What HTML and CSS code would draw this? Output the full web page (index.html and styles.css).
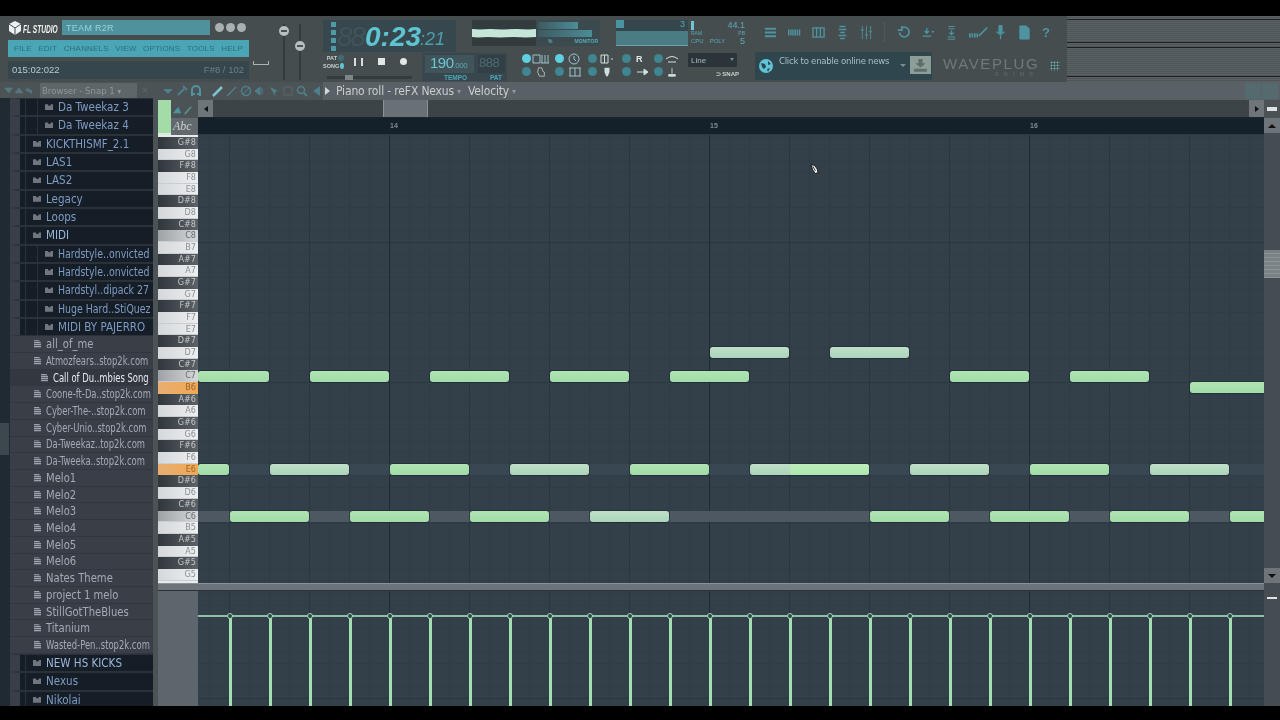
FILE: index.html
```html
<!DOCTYPE html>
<html lang="en">
<head>
  <meta charset="UTF-8">
  <title>FL Studio - Piano roll</title>
  <link rel="stylesheet" href="styles.css">
</head>
<body>

  <div class="app">

    <div class="toolbar">

      <div class="tb-main">
        <div class="title-row">
          <svg class="logo" viewBox="0 0 14 14"><path d="M7 0l6 3v7l-6 4-6-4V3z" fill="#eef1f1"/><path d="M7 7v7M1 3l6 4 6-4" stroke="#454d4f" fill="none"/></svg>
          <div class="logo-box"><span class="logo-text">FL STUDIO</span></div>
          <div class="title-chip">TEAM R2R</div>
          <div class="win-btns"><i></i><i></i><i></i></div>
        </div>
        <div class="menu">
          <span>FILE</span><span>EDIT</span><span>CHANNELS</span><span>VIEW</span><span>OPTIONS</span><span>TOOLS</span><span>HELP</span>
        </div>
        <div class="hint">
          <span>015:02:022</span>
          <span class="hint-right">F#8 / 102</span>
        </div>
      </div>

      <div class="tb-mix">
        <div class="mini-bars"></div>
        <div class="slider"><i class="k1"></i></div>
        <div class="slider"><i class="k2"></i></div>
      </div>

      <div class="tb-center">
        <div class="tb-top">
          <div class="time-panel">
            <div class="time-dots"><i></i><i></i><i></i><i></i></div>
            <span class="ghost">88</span>
            <span class="digits">0:23</span>
            <span class="digits-small">:21</span>
          </div>
          <div class="wave-panel">
            <div class="wave"><svg viewBox="0 0 64 10" preserveAspectRatio="none"><path d="M0 1l8 .5 10-.5 12 .5 14-.5 12 .5 8-.5v8l-10 .5-12-.5-14 .5-12-.5-10 .5-6-.5z" fill="#c6e6da"/></svg></div>
            <div class="monitor">
              <div class="mbar b1"></div>
              <div class="mbar b2"></div>
              <div class="monitor-label"><span>%</span><span>MONITOR</span></div>
            </div>
          </div>
          <div class="cpu-panel">
            <div class="cpu-left">
              <div class="cpu-head"><i></i><span>3</span></div>
              <div class="cpu-graph"></div>
            </div>
            <div class="cpu-right">
              <div class="cpu-line"><i></i><b>44.1</b></div>
              <div class="cpu-mini"><span>RAM</span><span>PB</span></div>
              <div class="cpu-line"><span>CPU</span><span>POLY</span><b>5</b></div>
            </div>
          </div>
        </div>
        <div class="tb-bottom">
          <div class="transport">
            <div class="transport-row">
              <div class="mode"><div><span>PAT</span><i></i></div><div><span>SONG</span><i class="on"></i></div></div>
              <div class="pause"></div>
              <div class="stop"></div>
              <div class="rec"></div>
            </div>
            <div class="pos-track"><i></i></div>
          </div>
          <div class="tempo">
            <div class="tempo-top">
              <div class="tempo-val">190<small>.000</small></div>
              <div class="pat-val">888</div>
            </div>
            <div class="tempo-labels"><span>TEMPO</span><span>PAT</span></div>
          </div>
          <div class="switches">
            <i class="led on"></i>
            <svg class="w18" viewBox="0 0 18 10"><path d="M1 1h7v8H1zM10 1v8M13 1v8M16 1v8M9 9h8" stroke="#9cc4cc" fill="none"/></svg>
            <i class="led on"></i>
            <svg class="w12" viewBox="0 0 12 12"><circle cx="6" cy="6" r="5" stroke="#9cc4cc" fill="none"/><path d="M6 3v3l2 2" stroke="#9cc4cc" fill="none"/></svg>
            <i class="led"></i>
            <svg viewBox="0 0 14 10"><path d="M1 1h7M1 1v8M4.500 1v8M8 1v8M1 9h7M11 5h2" stroke="#cfe0e2" fill="none"/></svg>
            <i class="led"></i>
            <span class="sw-r">R</span>
            <i class="led"></i>
            <svg viewBox="0 0 14 10"><path d="M1 5q6-5 12 0M3 8h8" stroke="#cfe0e2" fill="none"/></svg>

            <i class="led"></i>
            <svg class="w18" viewBox="0 0 18 12"><path d="M6 1h4l1 4 2 1v5H7L5 6z" stroke="#b8c8cc" fill="none"/></svg>
            <i class="led"></i>
            <svg viewBox="0 0 14 10"><path d="M2 1v8M7 1v8M12 1v8M1 9h12M1 1h12" stroke="#9cc4cc" fill="none"/></svg>
            <i class="led"></i>
            <svg viewBox="0 0 14 12"><path d="M4 1h6v5l-2 5H6L4 6z" fill="#cfe0e2"/></svg>
            <i class="led"></i>
            <svg viewBox="0 0 14 10"><path d="M1 5h8M8 2l4 3-4 3z" stroke="#cfe0e2" fill="#cfe0e2"/></svg>
            <i class="led"></i>
            <svg viewBox="0 0 14 12"><path d="M7 1v7M3 9h8v2H3z" stroke="#cfe0e2" fill="#cfe0e2"/></svg>
          </div>
          <div class="snap">
            <div class="snap-select"><span>Line</span><i></i></div>
            <div class="snap-label">&#8835; SNAP</div>
          </div>
        </div>
      </div>

      <div class="tb-right">
        <div class="shortcuts">
          <svg viewBox="0 0 14 14"><path d="M1 3h12M1 7h12M1 11h12" stroke-width="2"/></svg>
          <svg viewBox="0 0 18 14"><path d="M1 3v8M4 3v8M7 3v8M10 3v8M13 3v8M16 3v8" stroke-width="2"/></svg>
          <svg viewBox="0 0 14 14"><path d="M1 2h12v10H1zM5 2v10M9 2v10" stroke-width="1.500"/></svg>
          <svg viewBox="0 0 14 20"><path d="M3 2h8M2 6h10M4 10h6M2 14h10M4 18h6" stroke-width="2"/></svg>
          <svg viewBox="0 0 14 18"><path d="M2 1v16M7 1v16M12 1v16M0 6h4M5 12h4M10 8h4" stroke-width="1"/></svg>
          <span class="sep"></span>
          <svg viewBox="0 0 16 16"><path d="M5 3a6 6 0 1 1-2 5M6 0v5H1" stroke-width="2"/></svg>
          <svg viewBox="0 0 18 14"><path d="M8 1v7M5 5l3 3 3-3M2 12h12M15 6h3" stroke-width="2"/></svg>
          <svg viewBox="0 0 14 20"><path d="M3 2h8M3 5h8M7 7v6M4 10l3 3 3-3M2 16h10M2 19h10" stroke-width="1.500"/></svg>
          <svg class="wide" viewBox="0 0 24 16"><path d="M1 14V9M4 14V9M7 14V9M10 14V9M12 12L22 2" stroke-width="2"/></svg>
          <svg class="mic" viewBox="0 0 12 18"><path d="M6 2v7" stroke-width="5" stroke-linecap="round"/><path d="M1 8q5 6 10 0M6 12v5" stroke-width="1.500"/></svg>
          <svg viewBox="0 0 12 16"><path d="M1 1h7l3 3v11H1z" fill="#4f93a0"/></svg>
          <span class="help">?</span>
        </div>
        <div class="news-row">
          <div class="news">
            <svg class="globe" viewBox="0 0 14 14"><circle cx="7" cy="7" r="7" fill="#5fc4d6"/><path d="M2 4l4 1 1 3-2 2-2-2zM9 2l3 3-3 1zM8 10l3-1-2 4z" fill="#2f454d"/></svg>
            <span class="news-text">Click to enable online news</span>
            <i class="news-arrow"></i>
            <div class="news-btn"><svg viewBox="0 0 14 12"><path d="M5 0h4v4h3L7 8 2 4h3zM1 9h12v3H1z" fill="#5f6e69"/></svg></div>
          </div>
          <div class="waveplug">
            <div class="wp-name">WAVEPLUG</div>
            <div class="wp-sub">SKINS</div>
          </div>
          <div class="dots"></div>
        </div>
      </div>

      <div class="hatch">
        <div class="band b-a"></div>
        <div class="band b-b"></div>
        <div class="band b-c"></div>
        <div class="band b-d"></div>
        <div class="band b-e"></div>
      </div>
    </div>

    <div class="main">

      <div class="browser">
        <div class="browser-head">
          <svg viewBox="0 0 34 10"><path d="M1 3h8L5 8zM12 8h8l-4-5zM26 3l-3 2 3 2M24 5h5v4" fill="#55777f" stroke="#55777f"/></svg>
          <div class="browser-chip">Browser - Snap 1 <small>&#9662;</small></div>
          <span class="browser-x">&times;</span>
        </div>
        <div class="browser-body">
          <div class="side-strip"><i></i></div>
          <div class="tree">
            <div class="row folder sub"><b></b><span>Da Tweekaz 3</span></div>
            <div class="row folder sub"><b></b><span>Da Tweekaz 4</span></div>
            <div class="row folder"><b></b><span>KICKTHISMF_2.1</span></div>
            <div class="row folder"><b></b><span>LAS1</span></div>
            <div class="row folder"><b></b><span>LAS2</span></div>
            <div class="row folder"><b></b><span>Legacy</span></div>
            <div class="row folder"><b></b><span>Loops</span></div>
            <div class="row folder open"><b></b><span>MIDI</span></div>
            <div class="row folder sub tight"><b></b><span>Hardstyle..onvicted</span></div>
            <div class="row folder sub tight"><b></b><span>Hardstyle..onvicted</span></div>
            <div class="row folder sub tight"><b></b><span>Hardstyl..dipack 27</span></div>
            <div class="row folder sub tight"><b></b><span>Huge Hard..StiQuez</span></div>
            <div class="row folder sub"><b></b><span>MIDI BY PAJERRO</span></div>
            <div class="row file"><b></b><span>all_of_me</span></div>
            <div class="row file tight"><b></b><span>Atmozfears..stop2k.com</span></div>
            <div class="row file tight selected"><b></b><span>Call of Du..mbies Song</span></div>
            <div class="row file tight"><b></b><span>Coone-ft-Da..stop2k.com</span></div>
            <div class="row file tight"><b></b><span>Cyber-The-..stop2k.com</span></div>
            <div class="row file tight"><b></b><span>Cyber-Unio..stop2k.com</span></div>
            <div class="row file tight"><b></b><span>Da-Tweekaz..top2k.com</span></div>
            <div class="row file tight"><b></b><span>Da-Tweeka..stop2k.com</span></div>
            <div class="row file"><b></b><span>Melo1</span></div>
            <div class="row file"><b></b><span>Melo2</span></div>
            <div class="row file"><b></b><span>Melo3</span></div>
            <div class="row file"><b></b><span>Melo4</span></div>
            <div class="row file"><b></b><span>Melo5</span></div>
            <div class="row file"><b></b><span>Melo6</span></div>
            <div class="row file"><b></b><span>Nates Theme</span></div>
            <div class="row file"><b></b><span>project 1 melo</span></div>
            <div class="row file"><b></b><span>StillGotTheBlues</span></div>
            <div class="row file"><b></b><span>Titanium</span></div>
            <div class="row file tight"><b></b><span>Wasted-Pen..stop2k.com</span></div>
            <div class="row folder open"><b></b><span>NEW HS KICKS</span></div>
            <div class="row folder"><b></b><span>Nexus</span></div>
            <div class="row folder"><b></b><span>Nikolai</span></div>
          </div>
        </div>
      </div>

      <div class="roll">

        <div class="roll-title">
          <div class="roll-tools">
            <svg viewBox="0 0 12 12"><path d="M1 4h10L6 9z" fill="#4f7f8a"/></svg>
            <svg viewBox="0 0 12 12"><path d="M2 10l6-6M7 1l4 4" stroke="#4f7f8a" stroke-width="2" fill="none"/></svg>
            <svg viewBox="0 0 12 12"><path d="M2 11V5a4 4 0 0 1 8 0v6M2 9h3M7 9h3" stroke="#4f93a0" stroke-width="2" fill="none"/></svg>
            <span class="tool-sep"></span>
            <svg viewBox="0 0 12 12"><path d="M1 11L10 2" stroke="#7fc4d0" stroke-width="2.500"/></svg>
            <svg viewBox="0 0 12 12"><path d="M1 11L10 2" stroke="#4f7f8a" stroke-width="1.500"/></svg>
            <svg viewBox="0 0 12 12"><circle cx="6" cy="6" r="4.500" stroke="#4f7f8a" stroke-width="1.500" fill="none"/><path d="M3 9l6-6" stroke="#4f7f8a"/></svg>
            <svg viewBox="0 0 12 12"><path d="M1 6l5-4v8zM8 3v6" stroke="#4f7f8a" fill="#4f7f8a"/></svg>
            <svg viewBox="0 0 12 12"><path d="M2 2l8 4-3 1v4z" fill="#4f7f8a"/></svg>
            <svg viewBox="0 0 12 12"><path d="M2 2h8v8H2z" stroke="#55686f" fill="none"/></svg>
            <svg viewBox="0 0 12 12"><circle cx="5" cy="5" r="3.500" stroke="#4f7f8a" fill="none" stroke-width="1.500"/><path d="M8 8l3 3" stroke="#4f7f8a" stroke-width="2"/></svg>
            <svg viewBox="0 0 12 12"><path d="M10 1v10L3 6z" fill="#4f7f8a"/></svg>
          </div>
          <div class="roll-arrow"></div>
          <span class="roll-name">Piano roll - reFX Nexus</span><small>&#9662;</small>
          <span class="roll-name">Velocity</span><small>&#9662;</small>
          <div class="roll-win"><i></i><i></i></div>
        </div>

        <div class="roll-grid">
          <div class="corner">
            <div class="green"></div>
            <div class="corner-right">
              <div class="corner-tools"><svg viewBox="0 0 24 14"><path d="M2 11l6-7 3 7z" fill="#4f93a0"/><path d="M15 12l7-8" stroke="#5f8a85" stroke-width="2"/></svg></div>
              <div class="abc">Abc</div>
            </div>
          </div>

          <div class="hscroll">
            <div class="arrow-btn left"></div>
            <div class="hthumb"></div>
            <div class="arrow-btn right"></div>
          </div>

          <div class="ruler">
            <span class="bar-no b14">14</span>
            <span class="bar-no b15">15</span>
            <span class="bar-no b16">16</span>
          </div>

          <div class="vscroll">
            <div class="zoom-chip"><i></i></div>
            <div class="varrow up"></div>
            <div class="vtrack"><div class="vthumb"></div></div>
            <div class="varrow down"></div>
          </div>

          <div class="keys">
            <div class="key black">G#8</div>
            <div class="key white">G8</div>
            <div class="key black">F#8</div>
            <div class="key white">F8</div>
            <div class="key white">E8</div>
            <div class="key black">D#8</div>
            <div class="key white">D8</div>
            <div class="key black">C#8</div>
            <div class="key white c">C8</div>
            <div class="key white">B7</div>
            <div class="key black">A#7</div>
            <div class="key white">A7</div>
            <div class="key black">G#7</div>
            <div class="key white">G7</div>
            <div class="key black">F#7</div>
            <div class="key white">F7</div>
            <div class="key white">E7</div>
            <div class="key black">D#7</div>
            <div class="key white">D7</div>
            <div class="key black">C#7</div>
            <div class="key white c">C7</div>
            <div class="key orange">B6</div>
            <div class="key black">A#6</div>
            <div class="key white">A6</div>
            <div class="key black">G#6</div>
            <div class="key white">G6</div>
            <div class="key black">F#6</div>
            <div class="key white">F6</div>
            <div class="key orange">E6</div>
            <div class="key black">D#6</div>
            <div class="key white">D6</div>
            <div class="key black">C#6</div>
            <div class="key white c">C6</div>
            <div class="key white">B5</div>
            <div class="key black">A#5</div>
            <div class="key white">A5</div>
            <div class="key black">G#5</div>
            <div class="key white">G5</div>
          </div>

          <div class="notes">
            <div class="band-row e6"></div>
            <div class="band-row c6"></div>

            <div class="note d7 soft" style="left:512px;width:79px"></div>
            <div class="note d7 soft" style="left:632px;width:79px"></div>

            <div class="note c7" style="left:0;width:71px"></div>
            <div class="note c7" style="left:112px;width:79px"></div>
            <div class="note c7" style="left:232px;width:79px"></div>
            <div class="note c7" style="left:352px;width:79px"></div>
            <div class="note c7" style="left:472px;width:79px"></div>
            <div class="note c7" style="left:752px;width:79px"></div>
            <div class="note c7" style="left:872px;width:79px"></div>

            <div class="note b6" style="left:992px;width:80px"></div>

            <div class="note e6n" style="left:0;width:31px"></div>
            <div class="note e6n soft" style="left:72px;width:79px"></div>
            <div class="note e6n" style="left:192px;width:79px"></div>
            <div class="note e6n soft" style="left:312px;width:79px"></div>
            <div class="note e6n" style="left:432px;width:79px"></div>
            <div class="note e6n soft" style="left:552px;width:119px"></div>
            <div class="note e6n bright" style="left:592px;width:79px"></div>
            <div class="note e6n soft" style="left:712px;width:79px"></div>
            <div class="note e6n" style="left:832px;width:79px"></div>
            <div class="note e6n soft" style="left:952px;width:79px"></div>

            <div class="note c6n" style="left:32px;width:79px"></div>
            <div class="note c6n" style="left:152px;width:79px"></div>
            <div class="note c6n" style="left:272px;width:79px"></div>
            <div class="note c6n soft" style="left:392px;width:79px"></div>
            <div class="note c6n" style="left:672px;width:79px"></div>
            <div class="note c6n" style="left:792px;width:79px"></div>
            <div class="note c6n" style="left:912px;width:79px"></div>
            <div class="note c6n" style="left:1032px;width:40px"></div>

            <svg class="cursor" viewBox="0 0 10 12"><path d="M1 1l4 1 3 4 1 4-3 1-3-4z" fill="#f2f4f4" stroke="#111"/><path d="M3 3l3 5" stroke="#111"/></svg>
          </div>

          <div class="splitter"></div>
          <div class="splitter-right"></div>

          <div class="vel-left"></div>

          <div class="velocity">
            <div class="vel-line"></div>
            <div class="stems">
              <i></i><i></i><i></i><i></i><i></i><i></i><i></i><i></i><i></i><i></i><i></i><i></i><i></i>
              <i></i><i></i><i></i><i></i><i></i><i></i><i></i><i></i><i></i><i></i><i></i><i></i><i></i>
            </div>
          </div>

          <div class="vel-right"><i></i></div>
        </div>
      </div>

    </div>
  </div>

</body>
</html>
```

FILE: styles.css
```css
body {
  margin: 0;
  background: #000;
  font-family: 'Liberation Sans', sans-serif;
  overflow: hidden;
}

.app {
  margin-top: 16px;
  width: 1280px;
  height: 690px;
  overflow: hidden;
  background: #454d4f;
  filter: blur(0.5px);
}

svg {
  display: block;
}

/* top toolbar */

.toolbar {
  display: flex;
  height: 66px;
  background: #454d4f;
}

.tb-main {
  width: 241px;
  margin-left: 8px;
  margin-right: 1px;
  padding-top: 4px;
}

.title-row {
  display: flex;
  align-items: center;
  height: 15px;
}

.logo {
  flex: none;
  width: 14px;
  height: 14px;
}

.logo-box {
  flex: none;
  width: 40px;
  padding-left: 1px;
  box-sizing: border-box;
}

.logo-text {
  display: inline-block;
  color: #eef1f1;
  font: italic bold 10px 'Liberation Sans', sans-serif;
  white-space: nowrap;
  transform: scaleX(0.66);
  transform-origin: left;
}

.title-chip {
  width: 144px;
  height: 15px;
  padding-left: 4px;
  background: #4f929e;
  color: #99d2da;
  font-size: 9px;
  line-height: 16px;
  letter-spacing: 0.3px;
}

.win-btns {
  display: flex;
  gap: 2px;
  margin-left: 5px;
}

.win-btns i {
  width: 9px;
  height: 9px;
  border-radius: 50%;
  background: #a8b0b1;
}

.menu {
  display: flex;
  justify-content: space-between;
  height: 17px;
  margin-top: 5px;
  padding: 0 6px;
  background: #4aa5b4;
  color: #2c6f7f;
  font-size: 8px;
  line-height: 17px;
  letter-spacing: 0.2px;
}

.hint {
  display: flex;
  justify-content: space-between;
  height: 18px;
  margin-top: 4px;
  padding: 0 5px 0 4px;
  background: #36464d;
  color: #bccbce;
  font-size: 9.5px;
  line-height: 18px;
}

.hint-right {
  color: #6f7f86;
}

.tb-mix {
  position: relative;
  display: flex;
  gap: 14px;
  width: 70px;
  padding-left: 33px;
  box-sizing: border-box;
}

.mini-bars {
  position: absolute;
  left: 3px;
  top: 45px;
  width: 14px;
  height: 3px;
  border-bottom: 1px solid #a9b3b5;
  border-left: 1px solid #a9b3b5;
  border-right: 1px solid #a9b3b5;
}

.slider {
  position: relative;
  width: 2px;
  height: 56px;
  margin-top: 8px;
  background: #343b3d;
}

.slider i {
  position: absolute;
  left: -4px;
  width: 10px;
  height: 10px;
  border-radius: 50%;
  background: #b9bebf;
}

.slider i::after {
  content: "";
  position: absolute;
  left: 2px;
  top: 4px;
  width: 6px;
  height: 2px;
  background: #4a5153;
}

.slider .k1 {
  top: 2px;
}

.slider .k2 {
  top: 17px;
}

.tb-center {
  width: 430px;
  padding-left: 3px;
  box-sizing: border-box;
}

.tb-top {
  display: flex;
  height: 32px;
  margin-top: 4px;
}

.time-panel {
  display: flex;
  align-items: flex-end;
  width: 133px;
  height: 32px;
  box-sizing: border-box;
  padding-left: 8px;
  background: #36484e;
  white-space: nowrap;
}

.time-dots {
  display: grid;
  grid-template-columns: 4px;
  gap: 3px;
  align-self: center;
  width: 6px;
}

.time-dots i {
  width: 5px;
  height: 5px;
  background: #4f9aa8;
}

.ghost {
  width: 27px;
  color: #3f5359;
  font: italic 28px 'Liberation Sans', sans-serif;
  letter-spacing: -2px;
  line-height: 30px;
}

.digits {
  width: 55px;
  margin-left: 1px;
  color: #5fc4d2;
  font: italic bold 28px 'Liberation Sans', sans-serif;
  line-height: 31px;
}

.digits-small {
  color: #4f9fae;
  font: italic 18px 'Liberation Sans', sans-serif;
  line-height: 26px;
}

.wave-panel {
  display: flex;
  width: 128px;
  height: 26px;
  margin-left: 16px;
  background: #323c3f;
}

.wave {
  width: 64px;
  padding-top: 8px;
  box-sizing: border-box;
}

.wave svg {
  width: 64px;
  height: 10px;
}

.monitor {
  flex: 1;
  padding: 2px 0 0 2px;
  background: #3a4a4f;
}

.mbar {
  height: 7px;
  margin-bottom: 1px;
  background: linear-gradient(90deg, #3d5a60, #4c8d98);
}

.mbar.b1 {
  width: 40px;
}

.mbar.b2 {
  width: 54px;
}

.monitor-label {
  display: flex;
  justify-content: space-between;
  padding: 0 2px 0 10px;
  color: #5aaab8;
  font-size: 5px;
  font-weight: bold;
}

.cpu-panel {
  display: flex;
  width: 129px;
  height: 26px;
  margin-left: 16px;
}

.cpu-left {
  width: 72px;
  background: #35474c;
}

.cpu-head {
  display: flex;
  justify-content: space-between;
  height: 9px;
  padding-right: 3px;
  color: #55a5b2;
  font-size: 9px;
  line-height: 9px;
}

.cpu-head i {
  width: 8px;
  height: 8px;
  background: #4a95a3;
}

.cpu-graph {
  height: 14px;
  margin-top: 2px;
  background: #4a7c84;
  border-bottom: 1px solid #6ea3ab;
}

.cpu-right {
  flex: 1;
  padding: 0 0 0 3px;
  color: #5aaab8;
  font-size: 6px;
}

.cpu-line {
  display: flex;
  align-items: center;
  gap: 6px;
  height: 10px;
}

.cpu-line i {
  width: 3px;
  height: 9px;
  background: #6cc6d4;
}

.cpu-line b {
  margin-left: auto;
  font-size: 9px;
  font-weight: normal;
}

.cpu-mini {
  display: flex;
  justify-content: space-between;
  height: 6px;
  font-size: 5px;
  line-height: 6px;
}

.tb-bottom {
  display: flex;
  margin-top: 1px;
}

.transport {
  width: 99px;
}

.transport-row {
  display: flex;
  align-items: center;
  height: 17px;
}

.mode {
  width: 21px;
  color: #c5cfd1;
  font-size: 5.5px;
  font-weight: bold;
}

.mode div {
  display: flex;
  align-items: center;
  justify-content: flex-end;
  gap: 1px;
  height: 8px;
}

.mode i {
  width: 6px;
  height: 6px;
  border-radius: 50%;
  background: #3e6d76;
}

.mode i.on {
  background: #5fc4d2;
}

.pause {
  width: 5px;
  height: 8px;
  margin-left: 10px;
  border-left: 2px solid #d8dddd;
  border-right: 2px solid #d8dddd;
}

.stop {
  width: 7px;
  height: 7px;
  margin-left: 15px;
  background: #e2e6e6;
}

.rec {
  width: 7px;
  height: 7px;
  margin-left: 15px;
  border-radius: 50%;
  background: #e2e6e6;
}

.pos-track {
  width: 85px;
  height: 3px;
  margin: 6px 0 0 4px;
  background: #343b3d;
}

.pos-track i {
  display: block;
  width: 8px;
  height: 5px;
  margin-left: 18px;
  background: #7d8688;
  position: relative;
  top: -1px;
}

.tempo {
  width: 85px;
  height: 28px;
  background: #37474d;
}

.tempo-top {
  display: flex;
  justify-content: space-between;
  padding: 2px 2px 0 3px;
}

.tempo-val {
  width: 44px;
  padding-left: 5px;
  background: #40545a;
  color: #6cc6d4;
  font-size: 15px;
  line-height: 15px;
  letter-spacing: -0.5px;
}

.tempo-val small {
  color: #5aaab8;
  font-size: 8px;
}

.pat-val {
  width: 26px;
  padding-left: 1px;
  background: #323f44;
  color: #4a6c74;
  font-size: 13px;
  line-height: 15px;
  letter-spacing: -0.5px;
}

.tempo-labels {
  display: flex;
  justify-content: space-between;
  padding: 1px 5px 0 22px;
  color: #4ba8b6;
  font-size: 6.5px;
  font-weight: bold;
}

.switches {
  display: grid;
  grid-template-columns: 10px 23px 13px 20px 12px 22px 14px 18px 11px 16px;
  grid-auto-rows: 13px;
  align-items: center;
  justify-items: start;
  width: 159px;
  margin: -1px 7px 0 15px;
}

.switches svg {
  width: 14px;
  height: 10px;
}

.switches svg.w18 {
  width: 18px;
}

.switches svg.w12 {
  width: 12px;
  height: 12px;
}

.led {
  width: 9px;
  height: 9px;
  border-radius: 50%;
  background: #3f8592;
}

.led.on {
  background: #5fd0e0;
}

.sw-r {
  color: #dfe8e9;
  font-size: 9px;
  font-weight: bold;
}

.snap {
  width: 54px;
}

.snap-select {
  display: flex;
  justify-content: space-between;
  align-items: center;
  width: 49px;
  height: 14px;
  padding: 0 3px;
  box-sizing: border-box;
  background: #2b3438;
  color: #a9b9bc;
  font-size: 8px;
}

.snap-select i {
  width: 0;
  height: 0;
  border: 2px solid transparent;
  border-top: 3px solid #7a8a8e;
}

.snap-label {
  margin-top: 3px;
  padding-right: 3px;
  color: #c8d2d3;
  font-size: 6px;
  font-weight: bold;
  text-align: right;
}

.tb-right {
  width: 317px;
}

.shortcuts {
  display: flex;
  align-items: center;
  gap: 11px;
  height: 30px;
  padding: 2px 0 0 14px;
  box-sizing: border-box;
}

.shortcuts svg {
  flex: none;
  width: 13px;
  height: 15px;
  fill: none;
  stroke: #4f93a0;
}

.shortcuts svg.wide {
  width: 20px;
}

.shortcuts svg.mic {
  margin-left: -6px;
}

.sep {
  width: 1px;
  height: 18px;
  border-left: 1px dotted #5a6467;
}

.help {
  color: #4f93a0;
  font-size: 13px;
  font-weight: bold;
}

.news-row {
  display: flex;
  align-items: center;
  height: 28px;
  margin-top: 6px;
  padding-left: 5px;
}

.news {
  display: flex;
  width: 177px;
  height: 28px;
  background: #2f464e;
  box-sizing: border-box;
  padding: 0 1px;
}

.globe {
  flex: none;
  width: 14px;
  height: 14px;
  margin: 7px 0 0 3px;
}

.news-text {
  margin: 2px 0 0 6px;
  color: #a9bfc5;
  font: 9.5px 'DejaVu Sans Condensed', 'Liberation Sans', sans-serif;
  line-height: 13px;
  letter-spacing: -0.25px;
  white-space: nowrap;
}

.news-arrow {
  flex: none;
  width: 0;
  height: 0;
  margin: 12px 4px 0 auto;
  border: 3px solid transparent;
  border-top: 3px solid #7a8f95;
}

.news-btn {
  flex: none;
  width: 21px;
  height: 18px;
  margin-top: 4px;
  padding: 3px;
  box-sizing: border-box;
  background: #8c9e97;
}

.waveplug {
  width: 96px;
  margin-left: 11px;
  text-align: right;
}

.wp-name {
  color: #6f797b;
  font-size: 15px;
  line-height: 15px;
  letter-spacing: 1.6px;
  white-space: nowrap;
}

.wp-sub {
  padding-right: 1px;
  color: #5a6466;
  font-size: 6px;
  font-weight: bold;
  letter-spacing: 5px;
}

.dots {
  width: 10px;
  height: 10px;
  margin-left: 11px;
  background: radial-gradient(circle, #6fc0cc 0.8px, transparent 1.1px) 0 0 / 3px 3px;
}

.hatch {
  flex: 1;
  display: flex;
  flex-direction: column;
}

.band {
  background: repeating-linear-gradient(#5a6165 0 1px, #4e5559 1px 2px);
  border-bottom: 1px solid #1c2123;
}

.b-a { height: 3px; }
.b-b { height: 22px; }
.b-c { height: 4px; }
.b-d { height: 28px; }
.b-e { flex: 1; border-bottom: 0; }

/* browser + piano roll */

.main {
  display: flex;
  height: 624px;
}

.browser {
  width: 158px;
  background: #4b5357;
}

.browser-head {
  display: flex;
  align-items: center;
  height: 16px;
  padding-left: 4px;
  background: #4b5357;
}

.browser-head svg {
  width: 32px;
  height: 10px;
}

.browser-chip {
  width: 97px;
  height: 15px;
  margin-left: 4px;
  padding-left: 2px;
  box-sizing: border-box;
  background: #5e666a;
  color: #8f979b;
  font: 9.5px 'DejaVu Sans Condensed', 'Liberation Sans', sans-serif;
  line-height: 15px;
  white-space: nowrap;
}

.browser-x {
  margin-left: 5px;
  color: #5f686c;
  font-size: 11px;
}

.browser-body {
  display: flex;
  height: 608px;
}

.side-strip {
  position: relative;
  width: 10px;
  background: #1f2a33;
}

.side-strip i {
  position: absolute;
  left: 0;
  top: 325px;
  width: 9px;
  height: 32px;
  background: #3d484e;
}

.tree {
  width: 143px;
  background: #3a3e47;
  overflow: hidden;
}

.row {
  display: flex;
  align-items: center;
  box-sizing: border-box;
  white-space: nowrap;
  font: 12px 'DejaVu Sans Condensed', 'Liberation Sans', sans-serif;
}

/* small folder shape in front of each name */
.row b {
  flex: none;
  width: 8px;
  height: 6px;
  margin-right: 5px;
  background: #6f7680;
  clip-path: polygon(0 0, 35% 0, 45% 25%, 65% 25%, 75% 0, 100% 0, 100% 100%, 0 100%);
}

.row span {
  display: inline-block;
  transform: scaleX(0.96);
  transform-origin: left;
}

.row.file span {
  transform: scaleX(0.93);
}

.row.folder.tight span {
  transform: scaleX(0.87);
}

.row.file.tight span {
  transform: scaleX(0.78);
}

.folder {
  height: 18.33px;
  padding-left: 13px;
  border-left: 10px solid #3a3e47;
  border-top: 1px solid #2b3138;
  border-bottom: 1px solid #2b3138;
  background: linear-gradient(90deg, #2b3138 1px, transparent 1px) 5px 0 / 10px 100% repeat-y, #151e27;
  background-repeat: no-repeat;
  color: #7f9ac2;
}

.folder.sub {
  padding-left: 25px;
  background:
    linear-gradient(90deg, #2b3138 1px, transparent 1px) 5px 0 / 2px 100% no-repeat,
    linear-gradient(90deg, #2b3138 1px, transparent 1px) 17px 0 / 2px 100% no-repeat,
    #151e27;
}

.folder.open {
  color: #9db6da;
}

.file {
  height: 16.72px;
  padding-left: 24px;
  border-bottom: 1px solid #32363e;
  color: #a4aab3;
}

/* document shape for files */
.file b {
  width: 7px;
  height: 8px;
  margin-right: 5px;
  background: repeating-linear-gradient(#9aa3aa 0 1px, #59606a 1px 2px);
  clip-path: polygon(0 0, 70% 0, 100% 30%, 100% 100%, 0 100%);
}

.file.selected {
  padding-left: 31px;
  background: #33373f;
  color: #e6eaee;
}

.roll {
  flex: 1;
  background: #3d4549;
}

.roll-title {
  position: relative;
  display: flex;
  align-items: center;
  height: 18px;
  background: #596167;
  color: #c7cdd1;
}

.roll-title small {
  margin: 0 7px 0 3px;
  color: #8f979c;
  font-size: 8px;
}

.roll-tools {
  display: flex;
  align-items: center;
  gap: 2px;
  width: 165px;
  padding-left: 4px;
  box-sizing: border-box;
  background: #4b5357;
  height: 18px;
}

.roll-tools svg {
  width: 12px;
  height: 12px;
}

.tool-sep {
  width: 6px;
}

.roll-arrow {
  width: 0;
  height: 0;
  margin: 0 6px 0 2px;
  border: 4px solid transparent;
  border-left: 5px solid #d2d7da;
  border-right: 0;
}

.roll-name {
  font: 12px 'DejaVu Sans Condensed', 'Liberation Sans', sans-serif;
  letter-spacing: -0.15px;
  white-space: nowrap;
}

.roll-win {
  position: absolute;
  right: 2px;
  top: 1px;
  display: flex;
  gap: 1px;
}

.roll-win i {
  width: 16px;
  height: 16px;
  background: #556a6e;
}

.roll-grid {
  display: grid;
  grid-template-columns: 40px 1fr 16px;
  grid-template-rows: 18px 17px 448px 8px 115px;
}

.corner {
  grid-row: 1 / 3;
  display: flex;
  background: #4b5357;
}

.green {
  width: 13px;
  height: 33px;
  border: 1px solid #d8ecd8;
  border-width: 0 0 2px 0;
  background: #a4dca8;
}

.corner-right {
  width: 27px;
}

.corner-tools {
  height: 18px;
  padding-top: 3px;
  box-sizing: border-box;
}

.corner-tools svg {
  width: 22px;
  height: 13px;
}

.abc {
  height: 17px;
  background: #626a70;
  color: #c8ced2;
  font: italic 12px 'Liberation Serif', serif;
  line-height: 17px;
  padding-left: 2px;
  overflow: hidden;
}

.hscroll {
  display: flex;
  align-items: center;
  justify-content: space-between;
  position: relative;
  height: 17px;
  background: #3c4448;
  border-bottom: 1px solid #1c2529;
}

.arrow-btn {
  display: flex;
  align-items: center;
  justify-content: center;
  width: 15px;
  height: 17px;
  background: #6e757a;
}

.arrow-btn::after {
  content: "";
  border: 3px solid transparent;
}

.arrow-btn.left::after {
  border-right: 4px solid #111;
  border-left: 0;
}

.arrow-btn.right::after {
  border-left: 4px solid #111;
  border-right: 0;
}

.hthumb {
  position: absolute;
  left: 185px;
  top: 0;
  width: 45px;
  height: 17px;
  background: #697176;
  border: 1px solid #8b9195;
  border-width: 0 1px;
  box-sizing: border-box;
}

.ruler {
  position: relative;
  grid-column: 2;
  grid-row: 2;
  background: #14212b;
  border-bottom: 1px solid #2c3a44;
  color: #7c8a94;
  font-size: 7px;
  font-weight: bold;
}

.bar-no {
  position: absolute;
  top: 4px;
}

.b14 { left: 192px; }
.b15 { left: 512px; }
.b16 { left: 832px; }

.vscroll {
  position: relative;
  grid-column: 3;
  grid-row: 1 / 4;
  display: flex;
  flex-direction: column;
  background: #4b5357;
}

.zoom-chip {
  height: 18px;
  padding: 7px 3px 0;
  box-sizing: border-box;
}

.zoom-chip i {
  display: block;
  width: 10px;
  height: 4px;
  background: #dfe3e5;
}

.varrow {
  display: flex;
  align-items: center;
  justify-content: center;
  height: 15px;
  background: #6e757a;
}

.varrow::after {
  content: "";
  border: 4px solid transparent;
}

.varrow.up::after {
  border-bottom: 4px solid #111;
  border-top: 0;
}

.varrow.down::after {
  border-top: 4px solid #111;
  border-bottom: 0;
}

.vtrack {
  position: relative;
  flex: 1;
  background: #464d52;
}

.vthumb {
  position: absolute;
  left: 0;
  top: 117px;
  width: 16px;
  height: 28px;
  background: repeating-linear-gradient(#7a8287 0 3px, #8d9498 3px 4px);
}

.keys {
  grid-column: 1;
  grid-row: 3;
  padding-top: 2px;
  box-sizing: border-box;
  background: #e8eaec;
  overflow: hidden;
}

.key {
  height: 11.68px;
  padding-right: 2px;
  font: 9px 'DejaVu Sans Condensed', 'Liberation Sans', sans-serif;
  line-height: 11.68px;
  text-align: right;
  box-sizing: border-box;
}

.black {
  background: linear-gradient(90deg, #2f363c, #5c6268);
  color: #c4c8cb;
}

.white {
  background: linear-gradient(90deg, #d5d8da, #eceef0);
  color: #8b9094;
  border-bottom: 1px solid #c9ccd0;
}

.white.c {
  background: linear-gradient(90deg, #9ea2a6, #d6d8da);
  color: #666b70;
}

.orange {
  background: linear-gradient(90deg, #e8ae72, #f0a852);
  color: #9a6530;
}

.notes,
.velocity {
  position: relative;
  grid-column: 2;
  background-color: #33404a;
  background-image:
    linear-gradient(90deg, #1e2a34 1.5px, transparent 1.5px),
    linear-gradient(90deg, #29363f 1.5px, transparent 1.5px),
    linear-gradient(90deg, #2f3c46 1px, transparent 1px),
    linear-gradient(#2a3640 1px, transparent 1px),
    linear-gradient(#303d47 1px, transparent 1px);
  background-size: 320px 100%, 80px 100%, 20px 100%, 100% 140.16px, 100% 11.68px;
  background-position: 191px 0, 31px 0, 11px 0, 0 107px, 0 2px;
  overflow: hidden;
}

.notes {
  grid-row: 3;
}

.cursor {
  position: absolute;
  left: 612px;
  top: 28px;
  width: 9px;
  height: 12px;
}

.band-row {
  position: absolute;
  left: 0;
  right: 0;
  height: 11px;
}

.band-row.e6 {
  top: 329px;
  background: #394753;
}

.band-row.c6 {
  top: 376px;
  background: #4d5862;
}

.note {
  position: absolute;
  height: 11px;
  box-sizing: border-box;
  border-radius: 3px;
  background: linear-gradient(#b0e4b2, #a2dca8);
  box-shadow: 0 0 0 1px rgba(30, 42, 50, 0.6);
}

.note.soft {
  background: linear-gradient(#bfdfc9, #abd4bb);
}

.note.bright {
  background: linear-gradient(#bcecb8, #aee6ae);
  box-shadow: none;
}

.d7 { top: 212px; }
.c7 { top: 236px; }
.b6 { top: 247px; }
.e6n { top: 329px; }
.c6n { top: 376px; }

.splitter {
  grid-column: 1 / 3;
  grid-row: 4;
  background: #6c7479;
  border-top: 1px solid #8a9196;
  border-bottom: 1px solid #2b3236;
}

.splitter-right {
  grid-column: 3;
  grid-row: 4;
  background: #464d52;
}

.vel-left {
  grid-column: 1;
  grid-row: 5;
  background: #5d666d;
}

.velocity {
  grid-row: 5;
}

.vel-line {
  position: absolute;
  left: 0;
  right: 0;
  top: 24px;
  height: 2px;
  background: #8fbfa6;
}

.stems {
  position: absolute;
  left: 12px;
  right: 0;
  top: 0;
  bottom: 0;
  display: flex;
}

.stems i {
  position: relative;
  flex: none;
  width: 40px;
}

.stems i::before {
  content: "";
  position: absolute;
  left: 18.5px;
  top: 25px;
  bottom: 0;
  width: 3px;
  background: #a3dfb2;
}

.stems i::after {
  content: "";
  position: absolute;
  left: 17px;
  top: 22px;
  width: 6px;
  height: 6px;
  box-sizing: border-box;
  border: 1.5px solid #a3dfb2;
  border-radius: 50%;
  background: #33404a;
}

.vel-right {
  grid-column: 3;
  grid-row: 5;
  padding: 6px 3px 0;
  background: #464d52;
}

.vel-right i {
  display: block;
  width: 10px;
  height: 2px;
  background: #dfe3e5;
}
```
